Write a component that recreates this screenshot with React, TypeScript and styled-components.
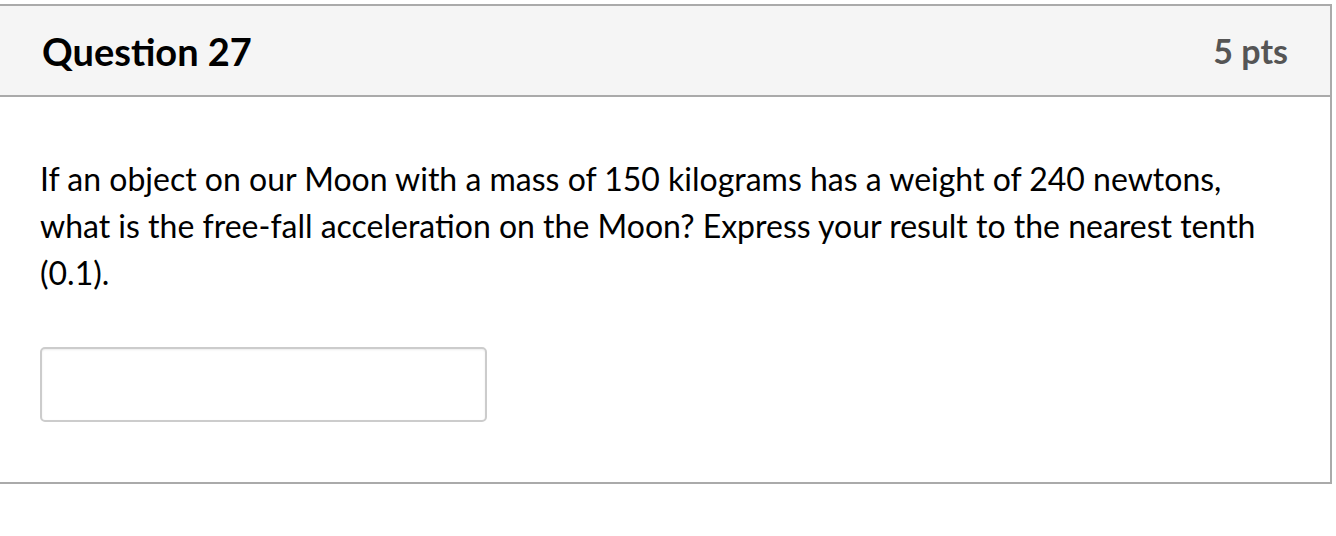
import React from "react";
import styled, { createGlobalStyle } from "styled-components";

const Global = createGlobalStyle`
  html, body { margin: 0; padding: 0; background: #fff; }
  body { font-family: Lato, "Liberation Sans", sans-serif; color: #000; }
`;

const Page = styled.div`
  padding-top: 4px;
  width: 1334px;
  margin-left: -2px;
`;

const Card = styled.section`
  border: 2px solid #aaaaaa;
  background: #fff;
`;

const Header = styled.header`
  display: flex;
  align-items: center;
  justify-content: space-between;
  height: 89px;
  padding: 0 42px 0 42px;
  background: #f5f5f5;
  border-bottom: 2px solid #aaaaaa;
`;

const Title = styled.h2`
  margin: 0;
  font-size: 38px;
  font-weight: 700;
  color: #000;
`;

const Points = styled.span`
  font-size: 34px;
  font-weight: 700;
  color: #555;
`;

const Body = styled.div`
  padding: 58px 42px 60px 40px;
`;

const Text = styled.p`
  margin: 0;
  font-size: 32px;
  line-height: 47px;
`;

const Answer = styled.input`
  display: block;
  margin-top: 51px;
  width: 447px;
  height: 75px;
  box-sizing: border-box;
  border: 2px solid #cccccc;
  border-radius: 5px;
  background: #fff;
  box-shadow: inset 0 1px 2px rgba(0, 0, 0, 0.08);
  outline: none;
`;

export default function App() {
  return (
    <>
      <Global />
      <Page>
        <Card>
          <Header>
            <Title>Question 27</Title>
            <Points>5 pts</Points>
          </Header>
          <Body>
            <Text>
              If an object on our Moon with a mass of 150 kilograms has a weight of 240 newtons,
              what is the free-fall acceleration on the Moon? Express your result to the nearest
              tenth (0.1).
            </Text>
            <Answer type="text" aria-label="Answer" />
          </Body>
        </Card>
      </Page>
    </>
  );
}
